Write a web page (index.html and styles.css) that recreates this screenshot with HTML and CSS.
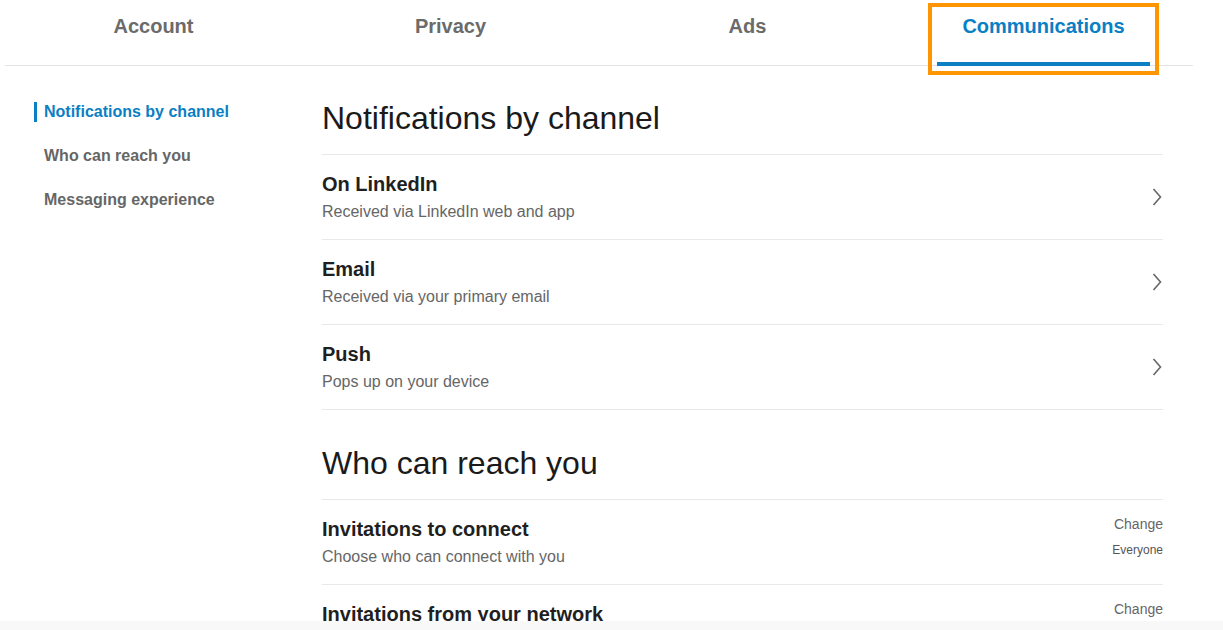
FILE: index.html
```html
<!DOCTYPE html>
<html lang="en">
<head>
<meta charset="utf-8">
<title>Settings – Communications</title>
<link rel="stylesheet" href="styles.css">
</head>
<body>
<div class="page">
  <nav class="tabs">
    <div class="tab"><a class="tab-link">Account</a></div>
    <div class="tab"><a class="tab-link">Privacy</a></div>
    <div class="tab"><a class="tab-link">Ads</a></div>
    <div class="tab"><a class="tab-link active">Communications</a></div>
  </nav>
  <div class="body">
    <aside class="side">
      <a class="side-item current">Notifications by channel</a>
      <a class="side-item">Who can reach you</a>
      <a class="side-item">Messaging experience</a>
    </aside>
    <main class="main">
      <section class="section">
        <h1 class="section-title">Notifications by channel</h1>
        <div class="row">
          <div class="row-text">
            <div class="row-title">On LinkedIn</div>
            <div class="row-sub">Received via LinkedIn web and app</div>
          </div>
          <svg class="chev" width="10" height="18" viewBox="0 0 10 18"><path d="M1.5 1 L8.5 9 L1.5 17" fill="none" stroke="#666" stroke-width="1.6"/></svg>
        </div>
        <div class="row">
          <div class="row-text">
            <div class="row-title">Email</div>
            <div class="row-sub">Received via your primary email</div>
          </div>
          <svg class="chev" width="10" height="18" viewBox="0 0 10 18"><path d="M1.5 1 L8.5 9 L1.5 17" fill="none" stroke="#666" stroke-width="1.6"/></svg>
        </div>
        <div class="row">
          <div class="row-text">
            <div class="row-title">Push</div>
            <div class="row-sub">Pops up on your device</div>
          </div>
          <svg class="chev" width="10" height="18" viewBox="0 0 10 18"><path d="M1.5 1 L8.5 9 L1.5 17" fill="none" stroke="#666" stroke-width="1.6"/></svg>
        </div>
      </section>
      <section class="section">
        <h2 class="section-title">Who can reach you</h2>
        <div class="row top">
          <div class="row-text">
            <div class="row-title">Invitations to connect</div>
            <div class="row-sub">Choose who can connect with you</div>
          </div>
          <div class="row-meta">
            <div class="change">Change</div>
            <div class="value">Everyone</div>
          </div>
        </div>
        <div class="row top">
          <div class="row-text">
            <div class="row-title">Invitations from your network</div>
            <div class="row-sub">Choose which invitations you want to receive</div>
          </div>
          <div class="row-meta">
            <div class="change">Change</div>
            <div class="value">All</div>
          </div>
        </div>
      </section>
    </main>
  </div>
</div>
<div class="fade"></div>
</body>
</html>
```

FILE: styles.css
```css
* { box-sizing: border-box; }
html, body { margin: 0; padding: 0; background: #fff; }
body {
  font-family: "Liberation Sans", Arial, Helvetica, sans-serif;
  color: #1f1f1f;
}
.page {
  width: 1188px;
  margin-left: 5px;
}
.tabs {
  display: grid;
  grid-template-columns: repeat(4, 1fr);
  border-bottom: 1px solid #e4e4e4;
  height: 66px;
}
.tab {
  display: flex;
  justify-content: center;
  padding-top: 12px;
}
.tab-link {
  display: block;
  height: 54px;
  padding: 2px 25px 0;
  font-size: 20px;
  line-height: 24px;
  font-weight: 700;
  color: #6b6b6b;
  border-bottom: 4px solid transparent;
  margin-bottom: -1px;
}
.tab-link.active {
  color: #0a7fc4;
  border-bottom-color: #0a7fc4;
  outline: 4px solid #ff9500;
  outline-offset: 5px;
  margin-right: 2px;
}
.body {
  display: flex;
}
.side {
  width: 317px;
  flex: none;
  padding: 36px 0 0 29px;
  display: flex;
  flex-direction: column;
  gap: 24px;
}
.side-item {
  display: block;
  font-size: 16px;
  line-height: 20px;
  font-weight: 700;
  color: #666;
  padding-left: 10px;
}
.side-item.current {
  color: #0a7fc4;
  border-left: 3px solid #0a7fc4;
  padding-left: 7px;
}
.main {
  flex: 1;
  padding: 34px 30px 0 0;
}
.section-title {
  margin: 0;
  font-size: 32px;
  line-height: 36px;
  font-weight: 400;
  color: #1a1a1a;
  padding-bottom: 18px;
  border-bottom: 1px solid #e6e9ec;
}
.section + .section .section-title { margin-top: 35px; }
.row {
  display: flex;
  align-items: center;
  justify-content: space-between;
  padding: 17px 0;
  border-bottom: 1px solid #e6e9ec;
}
.row.top { align-items: flex-start; }
.row-title {
  font-size: 20px;
  line-height: 24px;
  font-weight: 700;
  color: #1f1f1f;
  margin-bottom: 5px;
}
.row-sub {
  font-size: 16px;
  line-height: 20px;
  color: #666;
  padding-top: 1px;
}
.chev { display: block; margin-right: 1px; }
.row-meta {
  text-align: right;
  color: #666;
  margin-top: -1px;
}
.change { font-size: 14px; line-height: 16px; margin-bottom: 10px; }
.value { font-size: 12px; line-height: 16px; color: #555; }
.fade {
  position: fixed;
  left: 0;
  right: 0;
  bottom: 0;
  height: 9px;
  background: #f8f8f8;
}
```
